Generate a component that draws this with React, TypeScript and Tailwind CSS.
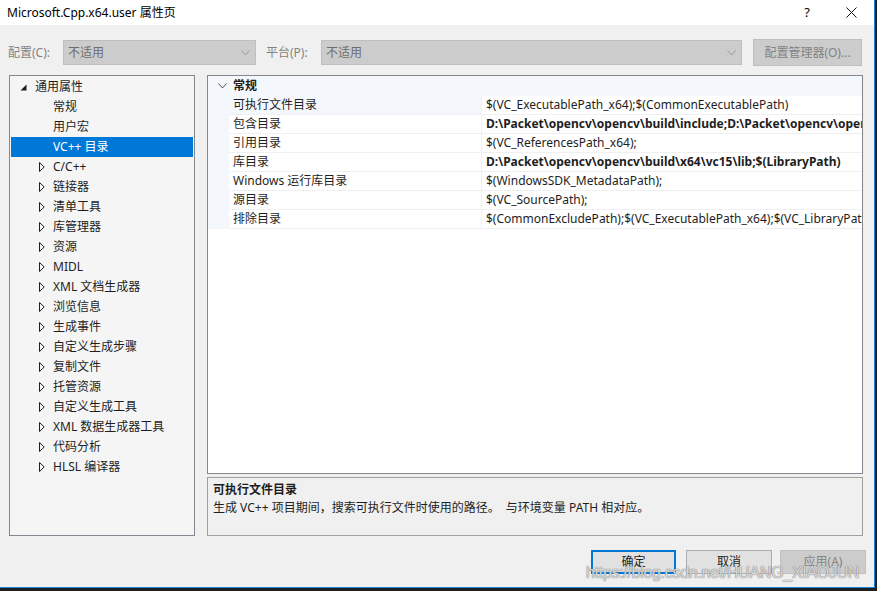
import React from "react";

const font = "font-['Noto_Sans','Noto_Sans_CJK_SC',sans-serif]";

type TreeItem = { label: string; level: 0 | 1; expander?: "open" | "closed"; selected?: boolean };

const treeItems: TreeItem[] = [
  { label: "通用属性", level: 0, expander: "open" },
  { label: "常规", level: 1 },
  { label: "用户宏", level: 1 },
  { label: "VC++ 目录", level: 1, selected: true },
  { label: "C/C++", level: 1, expander: "closed" },
  { label: "链接器", level: 1, expander: "closed" },
  { label: "清单工具", level: 1, expander: "closed" },
  { label: "库管理器", level: 1, expander: "closed" },
  { label: "资源", level: 1, expander: "closed" },
  { label: "MIDL", level: 1, expander: "closed" },
  { label: "XML 文档生成器", level: 1, expander: "closed" },
  { label: "浏览信息", level: 1, expander: "closed" },
  { label: "生成事件", level: 1, expander: "closed" },
  { label: "自定义生成步骤", level: 1, expander: "closed" },
  { label: "复制文件", level: 1, expander: "closed" },
  { label: "托管资源", level: 1, expander: "closed" },
  { label: "自定义生成工具", level: 1, expander: "closed" },
  { label: "XML 数据生成器工具", level: 1, expander: "closed" },
  { label: "代码分析", level: 1, expander: "closed" },
  { label: "HLSL 编译器", level: 1, expander: "closed" },
];

type Prop = { name: string; value: string; bold?: boolean; selected?: boolean };

const props: Prop[] = [
  { name: "可执行文件目录", value: "$(VC_ExecutablePath_x64);$(CommonExecutablePath)", selected: true },
  { name: "包含目录", value: "D:\\Packet\\opencv\\opencv\\build\\include;D:\\Packet\\opencv\\opencv\\build\\include\\opencv2;$(IncludePath)", bold: true },
  { name: "引用目录", value: "$(VC_ReferencesPath_x64);" },
  { name: "库目录", value: "D:\\Packet\\opencv\\opencv\\build\\x64\\vc15\\lib;$(LibraryPath)", bold: true },
  { name: "Windows 运行库目录", value: "$(WindowsSDK_MetadataPath);" },
  { name: "源目录", value: "$(VC_SourcePath);" },
  { name: "排除目录", value: "$(CommonExcludePath);$(VC_ExecutablePath_x64);$(VC_LibraryPath_x64)" },
];

function Chevron({ color = "#9a9a9a" }: { color?: string }) {
  return (
    <svg width="9" height="6" viewBox="0 0 9 6">
      <polyline points="0.5,0.5 4.5,5 8.5,0.5" fill="none" stroke={color} strokeWidth="1" />
    </svg>
  );
}

function Expander({ kind }: { kind: "open" | "closed" }) {
  if (kind === "open") {
    return (
      <svg width="7" height="7" viewBox="0 0 7 7">
        <polygon points="6.5,0.5 6.5,6.5 0.5,6.5" fill="#1e1e1e" />
      </svg>
    );
  }
  return (
    <svg width="6" height="10" viewBox="0 0 6 10">
      <polygon points="0.5,0.5 5.2,5 0.5,9.5" fill="none" stroke="#1e1e1e" strokeWidth="1" />
    </svg>
  );
}

function Combo({ width }: { width: string }) {
  return (
    <div className={`${width} h-[25px] bg-[#cccccc] border border-[#bfbfbf] flex items-center justify-between pl-[4px] pr-[5px] text-[12px] text-[#6d6d6d]`}>
      <span>不适用</span>
      <Chevron />
    </div>
  );
}

function TreePanel() {
  return (
    <div className="w-[186px] h-[461px] bg-[#f5f5f5] border border-[#828790] pt-[1px] px-[1px]">
      {treeItems.map((item) => (
        <div
          key={item.label}
          className={`h-[20px] flex items-center text-[12px] ${
            item.selected ? "bg-[#0078d7] text-white" : "text-[#1e1e1e]"
          }`}
        >
          {item.level === 0 ? (
            <>
              <span className="w-[9px]" />
              <Expander kind="open" />
              <span className="ml-[8px]">{item.label}</span>
            </>
          ) : (
            <>
              <span className="w-[34px] flex justify-end">
                {item.expander && <Expander kind="closed" />}
              </span>
              <span className="ml-[8px]">{item.label}</span>
            </>
          )}
        </div>
      ))}
    </div>
  );
}

function PropertyGrid() {
  return (
    <div className="h-[399px] bg-white border border-[#828790] overflow-hidden">
      <div className="h-[20px] bg-[#f4f7fb] flex items-center">
        <span className="w-[24px] flex justify-center pl-[4px]">
          <Chevron color="#555555" />
        </span>
        <span className="text-[12px] font-bold text-[#1e1e1e] pl-[1px]">常规</span>
      </div>
      <div className="flex">
        <div className="w-[21px] bg-[#f4f7fb] shrink-0" />
        <div className="flex-1 min-w-0">
          {props.map((p) => (
            <div key={p.name} className="h-[19px] flex border-b border-[#f0f0f0]">
              <div
                className={`w-[253px] shrink-0 flex items-center pl-[4px] text-[12px] text-[#1e1e1e] border-r border-[#f0f0f0] ${
                  p.selected ? "bg-[#f4f7fb]" : "bg-white"
                }`}
              >
                {p.name}
              </div>
              <div
                className={`flex-1 min-w-0 flex items-center pl-[4px] text-[12px] text-[#1e1e1e] whitespace-nowrap overflow-hidden ${
                  p.bold ? "font-bold" : ""
                }`}
              >
                {p.value}
              </div>
            </div>
          ))}
        </div>
      </div>
    </div>
  );
}

export default function App() {
  return (
    <div className={`w-[877px] h-[591px] bg-[#1f1f1f] ${font}`}>
      <div className="w-[875px] h-[588px] bg-[#f0f0f0] border-r border-b border-[#1883d7] flex flex-col relative">
        {/* title bar */}
        <div className="h-[25px] bg-white flex items-center pl-[7px] text-[12px] text-black shrink-0">
          <span>Microsoft.Cpp.x64.user 属性页</span>
          <span className="ml-auto mr-[36px] text-[13px]">?</span>
          <svg width="11" height="11" viewBox="0 0 11 11" className="mr-[17px]">
            <path d="M0.5 0.5 L10.5 10.5 M10.5 0.5 L0.5 10.5" stroke="#111" strokeWidth="1" />
          </svg>
        </div>

        {/* configuration toolbar */}
        <div className="h-[50px] flex items-start pt-[15px] pl-[8px] text-[12px] text-[#838383] shrink-0">
          <span className="w-[55px] h-[25px] flex items-center">配置(C):</span>
          <Combo width="w-[193px]" />
          <span className="ml-[10px] w-[55px] h-[25px] flex items-center">平台(P):</span>
          <Combo width="w-[421px]" />
          <div className="ml-[11px] -mt-[1px] w-[109px] h-[27px] bg-[#cccccc] border border-[#bfbfbf] flex items-center justify-center">
            配置管理器(O)...
          </div>
        </div>

        {/* main */}
        <div className="flex pl-[9px] gap-[12px] shrink-0">
          <TreePanel />
          <div className="w-[656px] flex flex-col gap-[3px]">
            <PropertyGrid />
            <div className="h-[59px] border border-[#a0a0a0] bg-[#f0f0f0] px-[5px] pt-[3px] text-[12px] text-[#1e1e1e]">
              <div className="font-bold h-[18px] flex items-center">可执行文件目录</div>
              <div className="h-[18px] flex items-center">
                生成 VC++ 项目期间，搜索可执行文件时使用的路径。&nbsp; 与环境变量 PATH 相对应。
              </div>
            </div>
          </div>
        </div>

        {/* buttons */}
        <div className="flex justify-end pt-[14px] pr-[8px] text-[12px]">
          <div className="w-[85px] h-[24px] bg-[#e1e1e1] border-2 border-[#0078d7] flex items-center justify-center text-[#1e1e1e]">
            确定
          </div>
          <div className="ml-[10px] w-[86px] h-[24px] bg-[#e1e1e1] border border-[#adadad] flex items-center justify-center text-[#1e1e1e]">
            取消
          </div>
          <div className="ml-[8px] w-[86px] h-[24px] bg-[#cccccc] border border-[#bfbfbf] flex items-center justify-center text-[#838383]">
            应用(A)
          </div>
        </div>

        {/* watermark */}
        <div className="absolute left-[586px] top-[561px] text-[16px] font-['Liberation_Sans',sans-serif] text-white/70 [text-shadow:0_0_1px_#7a7a7a,0_0_1px_#7a7a7a] tracking-[-0.3px]">
          https://blog.csdn.net/HUANG_XIAOJUN
        </div>
      </div>
    </div>
  );
}
